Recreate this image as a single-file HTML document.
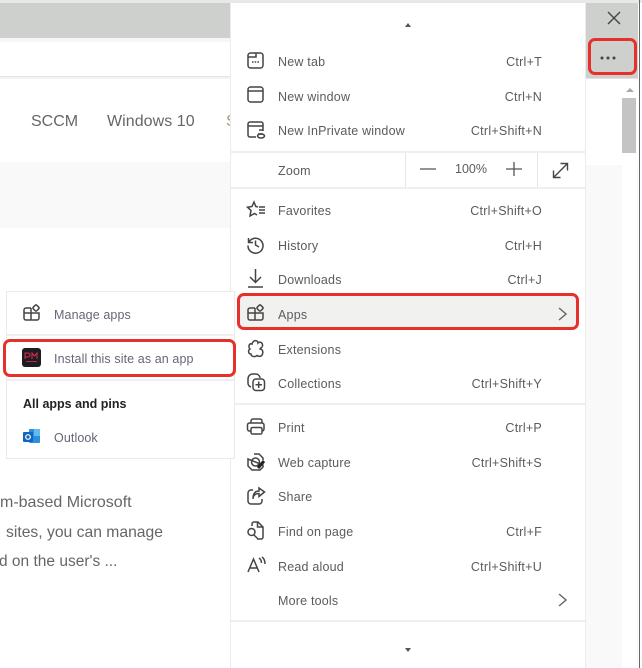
<!DOCTYPE html>
<html><head><meta charset="utf-8">
<style>
html,body{margin:0;padding:0;background:#fff}
#p{position:relative;width:642px;height:668px;overflow:hidden;background:#fff;font-family:"Liberation Sans",sans-serif;color:#555;filter:blur(.35px)}
.a{position:absolute}
.t{position:absolute;left:278px;margin-top:.7px;font-size:12.5px;letter-spacing:.2px;line-height:16px;color:#5b5b60;white-space:nowrap}
.k{position:absolute;right:100px;margin-top:.7px;font-size:12.5px;letter-spacing:.25px;line-height:16px;color:#5b5b60;white-space:nowrap}
.i{position:absolute;left:245px;width:22px;height:22px;fill:none;stroke:#444;stroke-width:1.5}
.s{position:absolute;left:54px;margin-top:.7px;font-size:12.5px;letter-spacing:.1px;line-height:16px;color:#667;white-space:nowrap}
.c{position:absolute;font-size:16px;line-height:20px;color:#666;white-space:nowrap}
</style></head><body><div id="p">
<!-- browser chrome -->
<div class="a" style="left:0;top:0;width:642px;height:3px;background:#e8e8e8"></div>
<div class="a" style="left:0;top:3px;width:230px;height:35px;background:#cdd0cc"></div>
<div class="a" style="left:0;top:38px;width:230px;height:4px;background:#f6f6f6"></div>
<div class="a" style="left:0;top:76px;width:230px;height:1px;background:#e4e4e4"></div>
<div class="a" style="left:0;top:77px;width:230px;height:2px;background:#f3f3f3"></div>
<div class="a" style="left:0;top:162px;width:230px;height:66px;background:#f8f9f8"></div>
<div class="a" style="left:586px;top:3px;width:52px;height:75px;background:#cdd0cc"></div>
<div class="a" style="left:586px;top:78px;width:52px;height:1px;background:#e2e2e2"></div>
<div class="a" style="left:638.500px;top:0;width:1.500px;height:668px;background:#666"></div>
<div class="a" style="left:586px;top:165px;width:52px;height:503px;background:#f9f9f9"></div>
<div class="a" style="left:622px;top:88px;width:15px;height:580px;background:#fff"></div>
<div class="a" style="left:622px;top:98px;width:14px;height:55px;background:#c4c4c4"></div>
<svg class="a" style="left:625px;top:86px" width="10" height="8"><path d="M1 6L5 2L9 6Z" fill="#aaa"/></svg>
<svg class="a" style="left:606px;top:10px" width="16" height="16" fill="none" stroke="#444" stroke-width="1.400"><path d="M2 2L14 14M14 2L2 14"/></svg>
<div class="a" style="left:588px;top:38px;width:43px;height:31px;border:3px solid #e8302a;border-radius:7px"></div>
<svg class="a" style="left:599px;top:55px" width="18" height="6" fill="#444"><circle cx="3" cy="3" r="1.500"/><circle cx="9" cy="3" r="1.500"/><circle cx="15" cy="3" r="1.500"/></svg>
<!-- page -->
<div class="c" style="left:31px;top:112px">SCCM</div>
<div class="c" style="left:107px;top:112px;letter-spacing:.05px">Windows 10</div>
<div class="c" style="left:226px;top:112px;color:#a97">S</div>
<div class="c" style="left:0;top:493px">m-based Microsoft</div>
<div class="c" style="left:6px;top:522.500px;font-size:15.700px">sites, you can manage</div>
<div class="c" style="left:-1px;top:551.500px;font-size:15.500px">d on the user's ...</div>
<!-- menu -->
<div class="a" style="left:230px;top:3px;width:356px;height:665px;background:#fff;border-left:1px solid #ececec;border-right:1px solid #ececec;box-sizing:border-box"></div>
<svg class="a" style="left:404px;top:22px" width="8" height="6"><path d="M1 5L4 1L7 5Z" fill="#555"/></svg>
<svg class="a" style="left:404px;top:647px" width="8" height="6"><path d="M1 1L4 5L7 1Z" fill="#555"/></svg>
<div class="a" style="left:231px;top:151px;width:354px;height:2px;background:#efefef"></div>
<div class="a" style="left:231px;top:187px;width:354px;height:2px;background:#efefef"></div>
<div class="a" style="left:231px;top:403px;width:354px;height:2px;background:#efefef"></div>
<div class="a" style="left:231px;top:620px;width:354px;height:2px;background:#efefef"></div>
<div class="a" style="left:405px;top:153px;width:1px;height:34px;background:#e6e6e6"></div>
<div class="a" style="left:537px;top:153px;width:1px;height:34px;background:#e6e6e6"></div>
<div class="a" style="left:237px;top:293px;width:342px;height:37px;background:#f1f2f0;border:3px solid #e8302a;border-radius:7px;box-sizing:border-box"></div>

<div class="t" style="top:53px">New tab</div><div class="k" style="top:53px">Ctrl+T</div>
<div class="t" style="top:88px">New window</div><div class="k" style="top:88px">Ctrl+N</div>
<div class="t" style="top:122px">New InPrivate window</div><div class="k" style="top:122px">Ctrl+Shift+N</div>
<div class="t" style="top:162px">Zoom</div>
<div class="t" style="top:202px">Favorites</div><div class="k" style="top:202px">Ctrl+Shift+O</div>
<div class="t" style="top:237px">History</div><div class="k" style="top:237px">Ctrl+H</div>
<div class="t" style="top:271px">Downloads</div><div class="k" style="top:271px">Ctrl+J</div>
<div class="t" style="top:306px">Apps</div>
<div class="t" style="top:341px">Extensions</div>
<div class="t" style="top:375px">Collections</div><div class="k" style="top:375px">Ctrl+Shift+Y</div>
<div class="t" style="top:419px">Print</div><div class="k" style="top:419px">Ctrl+P</div>
<div class="t" style="top:454px">Web capture</div><div class="k" style="top:454px">Ctrl+Shift+S</div>
<div class="t" style="top:488px">Share</div>
<div class="t" style="top:523px">Find on page</div><div class="k" style="top:523px">Ctrl+F</div>
<div class="t" style="top:558px">Read aloud</div><div class="k" style="top:558px">Ctrl+Shift+U</div>
<div class="t" style="top:592px">More tools</div>

<div class="a" style="left:455px;top:161px;font-size:12.500px;line-height:16px;color:#5b5b60">100%</div>
<svg class="a" style="left:418px;top:160px" width="110" height="18" fill="none" stroke="#555" stroke-width="1.300"><path d="M2 9H18M88 9H104M96 2V16"/></svg>
<svg class="a" style="left:552px;top:161.500px" width="17" height="17" fill="none" stroke="#444" stroke-width="1.400"><path d="M1.500 15.500L15.500 1.500M8.500 1.500H15.500V8.500M1.500 8.500V15.500H8.500"/></svg>
<svg class="a" style="left:557px;top:306px" width="10" height="16" fill="none" stroke="#666" stroke-width="1.400"><path d="M2 2L9 8L2 14"/></svg>
<svg class="a" style="left:557px;top:592px" width="10" height="16" fill="none" stroke="#666" stroke-width="1.400"><path d="M2 2L9 8L2 14"/></svg>

<svg class="i" style="top:50px" viewBox="0 0 22 22"><rect x="3" y="3" width="15" height="15" rx="2.500"/><path d="M3 7H11V3"/><path d="M7 12H14" stroke-dasharray="1.500 1.200"/></svg>
<svg class="i" style="top:84px" viewBox="0 0 22 22"><rect x="3" y="3" width="15" height="15" rx="2.500"/><path d="M3 7H18"/></svg>
<svg class="i" style="top:119px" viewBox="0 0 22 22"><path d="M11 18H5a2 2 0 0 1-2-2V5a2 2 0 0 1 2-2H16a2 2 0 0 1 2 2V12M3 7H18M14 11h4M13 15h5"/><ellipse cx="16" cy="17" rx="3.500" ry="2"/></svg>
<svg class="i" style="top:199px" viewBox="0 0 22 22"><path d="M13 8L10.800 7.500L9 3L7 7.500L2.500 8.200L6 11.500L5 17L9.500 14.500L12 16M14 8H20M14 11H20M14 14H20"/></svg>
<svg class="i" style="top:233px" viewBox="0 0 22 22"><path d="M3.500 5V9.500H8M4 9A7.500 7.500 0 1 1 3 12.500M10.500 7.500V12L14 14"/></svg>
<svg class="i" style="top:267px" viewBox="0 0 22 22"><path d="M10.500 2V15M5 10L10.500 15.500L16 10M3 20H18"/></svg>
<svg class="i" style="top:303px" viewBox="0 0 22 22"><path d="M10 5H5a2 2 0 0 0-2 2V15a2 2 0 0 0 2 2H16a2 2 0 0 0 2-2V10H3M10 5V17"/><rect x="12.500" y="2.500" width="5" height="5" rx="1.300" transform="rotate(45 15 5)"/></svg>
<svg class="i" style="top:338px" viewBox="0 0 22 22"><path d="M9 3C11 2 13 3 13 5C15 3 18 5 17.500 8C17 10 15 10 15 11C17 11 18.500 13 17.500 16C17 18.500 14 19 12 17.500C10 19.500 6 18.500 6 16C3 16 3 12 5 11C3 9 4 5 7 6C7 5 8 4 9 3Z"/></svg>
<svg class="i" style="top:372px" viewBox="0 0 22 22"><path d="M6 15A4 4 0 0 1 3 11V7C3 4 5 2 8 2H11C13 2 15 4 15 6"/><rect x="8" y="7" width="11.500" height="11.500" rx="3"/><path d="M13.700 9.500V16M10.500 12.700H17"/></svg>
<svg class="i" style="top:416px" viewBox="0 0 22 22"><path d="M6 7V5a2 2 0 0 1 2-2H15a2 2 0 0 1 2 2V7M6 15H4.500a2 2 0 0 1-2-2V9a2 2 0 0 1 2-2H17a2 2 0 0 1 2 2V13a2 2 0 0 1-2 2H17"/><rect x="6" y="11.500" width="11" height="6.500" rx="1.500"/></svg>
<svg class="i" style="top:451px" viewBox="0 0 22 22"><path d="M9 3H14L18 7V9M18 14V16L15 19H7L3 15V8Z"/><circle cx="10.500" cy="11" r="4"/><path d="M13 17L19 10" stroke-width="3" stroke="#222"/></svg>
<svg class="i" style="top:485px" viewBox="0 0 22 22"><path d="M8 5H6a3 3 0 0 0-3 3V16a3 3 0 0 0 3 3H14a3 3 0 0 0 3-3V14M8 14C8 10 11 8.500 14 8.500V11.500L19.500 7L14 3V6C10 6 8 9 8 14Z"/></svg>
<svg class="i" style="top:520px" viewBox="0 0 22 22"><path d="M7 6V4a2 2 0 0 1 2-2H13L18 7V17a2 2 0 0 1-2 2H12M12.500 2V7H18"/><circle cx="6.500" cy="12" r="3.500"/><path d="M9 15L12.500 18.500"/></svg>
<svg class="i" style="top:555px" viewBox="0 0 22 22"><path d="M3 17L8.500 4L14 17M5 13H12M14 3C15.500 4 16.500 6 16.500 8M17 2C19 3.500 20 6 20 9"/></svg>

<!-- submenu -->
<div class="a" style="left:6px;top:291px;width:229px;height:168px;background:#fff;border:1px solid #eaeaea;box-sizing:border-box"></div>
<div class="a" style="left:7px;top:334px;width:227px;height:2px;background:#efefef"></div>
<div class="a" style="left:7px;top:379px;width:227px;height:2px;background:#efefef"></div>
<div class="a" style="left:3px;top:339px;width:233px;height:38px;border:3px solid #e8302a;border-radius:7px;box-sizing:border-box;background:#fff"></div>
<div class="s" style="top:306px">Manage apps</div>
<div class="s" style="top:350px">Install this site as an app</div>
<div class="a" style="left:23px;top:395.500px;font-size:12.500px;line-height:16px;color:#222;font-weight:bold;white-space:nowrap">All apps and pins</div>
<div class="s" style="top:429px">Outlook</div>
<svg class="i" style="left:21px;top:303px" viewBox="0 0 22 22"><path d="M10 5H5a2 2 0 0 0-2 2V15a2 2 0 0 0 2 2H16a2 2 0 0 0 2-2V10H3M10 5V17"/><rect x="12.500" y="2.500" width="5" height="5" rx="1.300" transform="rotate(45 15 5)"/></svg>
<div class="a" style="left:22px;top:348px;width:19px;height:19px;background:#1c1c22;border-radius:3px"></div>
<svg class="a" style="left:24px;top:352px" width="15" height="11" fill="none" stroke="#e0304a" stroke-width="1"><path d="M1 7V1H4a1.500 1.500 0 0 1 0 4H1M8 7V1L10.500 4L13 1V7"/><path d="M2 9.500H13" stroke-width=".8"/></svg>
<svg class="a" style="left:23px;top:428px" width="18" height="17"><rect x="6" y="1" width="11" height="14" rx="1" fill="#2a8fdc"/><rect x="11" y="1" width="6" height="7" fill="#64b9ef"/><rect x="0" y="4" width="10" height="10" rx="1" fill="#1067bd"/><circle cx="5" cy="9" r="2.300" fill="none" stroke="#fff" stroke-width="1.200"/></svg>
</div></body></html>
